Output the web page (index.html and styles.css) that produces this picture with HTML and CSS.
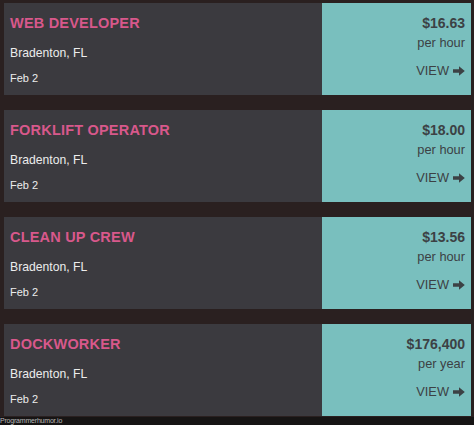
FILE: index.html
```html
<!DOCTYPE html>
<html>
<head>
<meta charset="utf-8">
<link rel="stylesheet" href="styles.css">
</head>
<body>
<div class="page">
  <div class="list">
    <div class="card">
      <div class="info">
        <div class="title">WEB DEVELOPER</div>
        <div class="loc">Bradenton, FL</div>
        <div class="date">Feb 2</div>
      </div>
      <div class="pay">
        <div class="price">$16.63</div>
        <div class="per">per hour</div>
        <div class="view">VIEW <svg class="arrow" viewBox="0 0 12 10"><path d="M0 3.2H6V0.3L11.8 5L6 9.7V6.8H0Z"/></svg></div>
      </div>
    </div>
    <div class="card">
      <div class="info">
        <div class="title">FORKLIFT OPERATOR</div>
        <div class="loc">Bradenton, FL</div>
        <div class="date">Feb 2</div>
      </div>
      <div class="pay">
        <div class="price">$18.00</div>
        <div class="per">per hour</div>
        <div class="view">VIEW <svg class="arrow" viewBox="0 0 12 10"><path d="M0 3.2H6V0.3L11.8 5L6 9.7V6.8H0Z"/></svg></div>
      </div>
    </div>
    <div class="card">
      <div class="info">
        <div class="title">CLEAN UP CREW</div>
        <div class="loc">Bradenton, FL</div>
        <div class="date">Feb 2</div>
      </div>
      <div class="pay">
        <div class="price">$13.56</div>
        <div class="per">per hour</div>
        <div class="view">VIEW <svg class="arrow" viewBox="0 0 12 10"><path d="M0 3.2H6V0.3L11.8 5L6 9.7V6.8H0Z"/></svg></div>
      </div>
    </div>
    <div class="card">
      <div class="info">
        <div class="title">DOCKWORKER</div>
        <div class="loc">Bradenton, FL</div>
        <div class="date">Feb 2</div>
      </div>
      <div class="pay">
        <div class="price">$176,400</div>
        <div class="per">per year</div>
        <div class="view">VIEW <svg class="arrow" viewBox="0 0 12 10"><path d="M0 3.2H6V0.3L11.8 5L6 9.7V6.8H0Z"/></svg></div>
      </div>
    </div>
  </div>
  <div class="footer">Programmerhumor.io</div>
</div>
</body>
</html>
```
FILE: styles.css
```css
html, body {
  margin: 0;
  padding: 0;
  background: #2a2020;
  font-family: "Liberation Sans", Arial, sans-serif;
}
.page {
  width: 474px;
  height: 425px;
  overflow: hidden;
  display: flex;
  flex-direction: column;
}
.list {
  display: flex;
  flex-direction: column;
  gap: 15px;
  padding: 3px 3px 0 4px;
}
.card {
  display: grid;
  grid-template-columns: 1fr 149px;
  height: 92px;
}
.info {
  background: #3b3a3f;
  padding: 11px 0 0 6px;
  display: flex;
  flex-direction: column;
}
.title {
  color: #d8588b;
  font-weight: bold;
  font-size: 14.5px;
  line-height: 18px;
  letter-spacing: 0.2px;
}
.loc {
  color: #ececec;
  font-size: 12.2px;
  line-height: 16px;
  margin-top: 13px;
}
.date {
  color: #ececec;
  font-size: 11px;
  line-height: 14px;
  margin-top: 10px;
}
.pay {
  background: #79bfbe;
  padding: 11px 6px 0 0;
  display: flex;
  flex-direction: column;
  align-items: flex-end;
  color: #3c4144;
}
.price {
  font-weight: bold;
  font-size: 14px;
  line-height: 18px;
}
.per {
  font-size: 12.8px;
  line-height: 16px;
  margin-top: 3px;
}
.view {
  font-size: 12.8px;
  line-height: 16px;
  margin-top: 12px;
  display: flex;
  align-items: center;
  gap: 4px;
}
.arrow {
  width: 12px;
  height: 10px;
  fill: #3c4144;
}
.footer {
  flex: 1;
  background: #161414;
  margin-top: 1px;
  color: #b8b8b8;
  font-size: 7px;
  line-height: 8px;
  letter-spacing: -0.2px;
}
```
